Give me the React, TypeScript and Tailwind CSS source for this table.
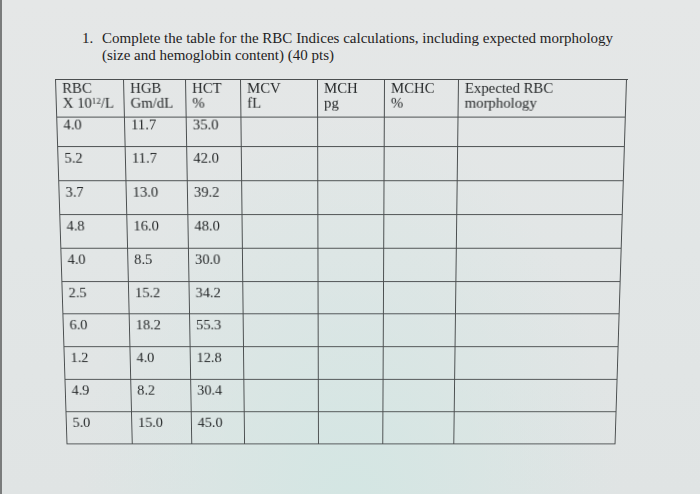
import React from "react";

const rows: [string, string, string][] = [
  ["4.0", "11.7", "35.0"],
  ["5.2", "11.7", "42.0"],
  ["3.7", "13.0", "39.2"],
  ["4.8", "16.0", "48.0"],
  ["4.0", "8.5", "30.0"],
  ["2.5", "15.2", "34.2"],
  ["6.0", "18.2", "55.3"],
  ["1.2", "4.0", "12.8"],
  ["4.9", "8.2", "30.4"],
  ["5.0", "15.0", "45.0"],
];

const headers: [string, React.ReactNode][] = [
  ["RBC", <>X 10<sup className="text-[9px]">12</sup>/L</>],
  ["HGB", "Gm/dL"],
  ["HCT", "%"],
  ["MCV", "fL"],
  ["MCH", "pg"],
  ["MCHC", "%"],
  ["Expected RBC", "morphology"],
];

const grid = "grid grid-cols-[68px_62px_55px_77px_67px_74px_168px]";
const cell = "border-r-[1.5px] border-b-[1.5px] border-[#4a4e4f] pl-[6px]";

export default function App() {
  return (
    <div
      className="relative w-[700px] h-[494px] overflow-hidden bg-[radial-gradient(ellipse_at_50%_105%,#d3e6e3_0%,rgba(211,230,227,0)_55%),linear-gradient(180deg,#e5e7e7_0%,#e2e6e6_50%,#e0e4e4_100%)] border-l-2 border-[#7a7c7c] text-[#1f2223]"
      style={{ fontFamily: '"Liberation Serif", "Times New Roman", serif' }}
    >
      <div className="pt-[30px] pl-[80px] flex text-[15px] leading-[17px]">
        <span className="w-[20px] shrink-0">1.</span>
        <div className="w-[560px]">
          <div>Complete the table for the RBC Indices calculations, including expected morphology</div>
          <div>(size and hemoglobin content) (40 pts)</div>
        </div>
      </div>

      <div className="mt-[7px] ml-[45px] w-[588.5px] p-[8px] origin-[50%_8px] [transform:perspective(1000px)_rotateX(-6.29deg)] [outline:1px_solid_transparent]">
        <div className="w-[572.5px] border-t-[1.5px] border-l-[1.5px] border-[#4a4e4f] text-[14.8px] leading-[15px] text-[#26292a]">
          <div className={grid + " h-[38px]"}>
            {headers.map(([a, b], i) => (
              <div key={i} className={cell + " pt-[1px]"}>
                <div>{a}</div>
                <div>{b}</div>
              </div>
            ))}
          </div>
          {rows.map((r, i) => (
            <div key={i} className={grid + (i === 0 ? " h-[30px]" : " h-[34.9px]")}>
              {[...r, "", "", "", ""].map((c, j) => (
                <div key={j} className={cell + (i === 0 ? " pt-0" : " pt-[4px]")}>
                  {c}
                </div>
              ))}
            </div>
          ))}
        </div>
      </div>
    </div>
  );
}
